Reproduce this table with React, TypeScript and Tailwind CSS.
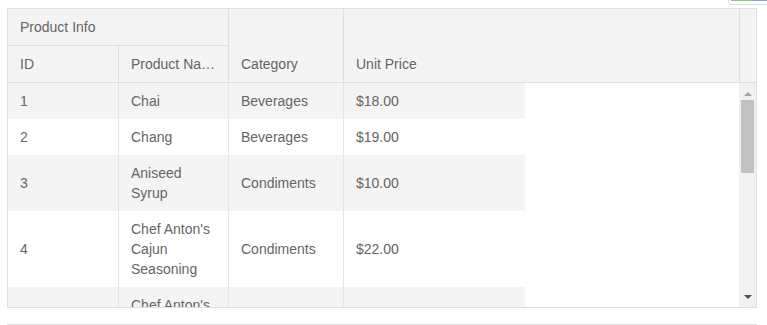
import type { ReactNode } from 'react'

// ============================================================================
// DATA
// ============================================================================

interface Produto {
  id: number
  nome: string[]
  categoria: string
  preco: string
}

const PRODUTOS: Produto[] = [
  { id: 1, nome: ['Chai'], categoria: 'Beverages', preco: '$18.00' },
  { id: 2, nome: ['Chang'], categoria: 'Beverages', preco: '$19.00' },
  { id: 3, nome: ['Aniseed', 'Syrup'], categoria: 'Condiments', preco: '$10.00' },
  { id: 4, nome: ["Chef Anton's", 'Cajun', 'Seasoning'], categoria: 'Condiments', preco: '$22.00' },
  { id: 5, nome: ["Chef Anton's", 'Gumbo Mix'], categoria: 'Condiments', preco: '$21.35' },
]

// ============================================================================
// PIECES
// ============================================================================

function Scrollbar(): ReactNode {
  return (
    <div className="flex w-[17px] shrink-0 flex-col items-center bg-[#f1f1f1]">
      <div className="mt-[9px] h-0 w-0 border-x-[4px] border-b-[4px] border-x-transparent border-b-[#a3a3a3]" />
      <div className="mt-[4px] h-[73px] w-[13px] bg-[#c1c1c1]" />
      <div className="flex-1" />
      <div className="mb-[8px] h-0 w-0 border-x-[4px] border-t-[4px] border-x-transparent border-t-[#505050]" />
    </div>
  )
}

// ============================================================================
// COMPONENT
// ============================================================================

export default function App(): ReactNode {
  return (
    <div
      className="relative h-[325px] w-[767px] overflow-hidden bg-white pl-[7px] pt-[8px] text-[14px] text-[#656565]"
      style={{ fontFamily: '"Liberation Sans", Arial, sans-serif' }}
    >
      {/* Toolbar fragment at the top right */}
      <div className="absolute right-[-6px] top-[-4px] h-[9px] w-[45px] rounded-[3px] border border-[#dcdcdc] bg-white p-[2px]">
        <div className="flex h-[2px] w-full">
          <div className="w-[21px] bg-[#8fc98a]" />
          <div className="flex-1 bg-[#8da4e3]" />
        </div>
      </div>

      {/* Grid */}
      <div className="w-[750px] border border-[#dfdfdf]">
        {/* Header */}
        <div className="flex border-b border-[#dfdfdf] bg-[#f4f4f4]">
          <div className="grid w-[731px] grid-cols-[110px_110px_115px_1fr] grid-rows-[37px_36px]">
            <div className="col-span-2 flex items-center border-b border-[#dfdfdf] px-3">Product Info</div>
            <div className="row-span-2 flex items-end border-l border-[#dfdfdf] px-3 pb-[7px]">Category</div>
            <div className="row-span-2 flex items-end border-l border-[#dfdfdf] px-3 pb-[7px]">Unit Price</div>
            <div className="flex items-center px-3">ID</div>
            <div className="flex items-center truncate border-l border-[#dfdfdf] px-3">
              <span className="truncate">Product Name</span>
            </div>
          </div>
          <div className="w-[17px] shrink-0 border-l border-[#dfdfdf]" />
        </div>

        {/* Body */}
        <div className="flex h-[224px] overflow-hidden">
          <div className="w-[731px] overflow-hidden">
            <div className="w-[517px]">
              {PRODUTOS.map((p, i) => (
                <div
                  key={p.id}
                  className={`grid grid-cols-[110px_110px_115px_182px] leading-5 ${i % 2 === 0 ? 'bg-[#f4f4f4]' : 'bg-white'}`}
                >
                  <div className="flex items-center px-3 py-2">{p.id}</div>
                  <div className="flex flex-col justify-center border-l border-[#e6e6e6] px-3 py-2">
                    {p.nome.map((linha) => (
                      <span key={linha}>{linha}</span>
                    ))}
                  </div>
                  <div className="flex items-center border-l border-[#e6e6e6] px-3 py-2">{p.categoria}</div>
                  <div className="flex items-center border-l border-[#e6e6e6] px-3 py-2">{p.preco}</div>
                </div>
              ))}
            </div>
          </div>
          <Scrollbar />
        </div>
      </div>

      {/* Next block */}
      <div className="mt-4 h-4 w-[750px] border-t border-[#dfdfdf]" />
    </div>
  )
}
